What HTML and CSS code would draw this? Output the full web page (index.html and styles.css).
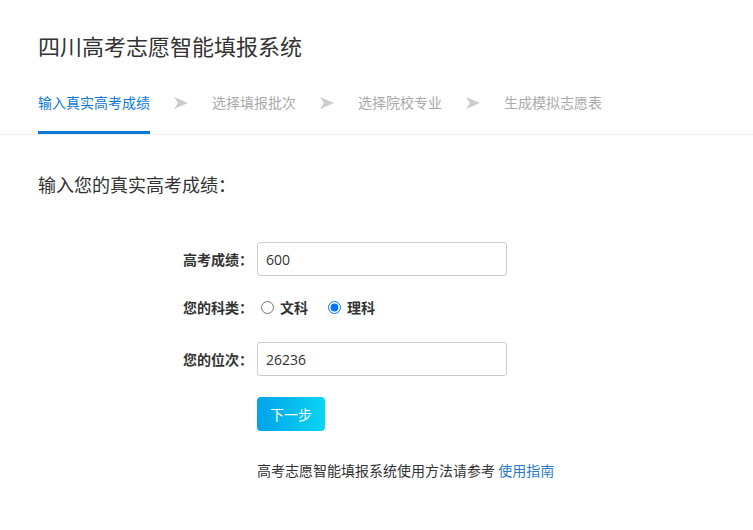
FILE: index.html
```html
<!DOCTYPE html>
<html lang="zh-CN">
<head>
<meta charset="utf-8">
<title>四川高考志愿智能填报系统</title>
<link rel="stylesheet" href="styles.css">
</head>
<body>
<header class="header">
  <h1 class="title">四川高考志愿智能填报系统</h1>
  <nav class="steps">
    <span class="step active">输入真实高考成绩</span>
    <svg class="arrow" width="14" height="12" viewBox="0 0 14 12"><path d="M0 0 L14 6 L0 12 L4 6 Z" fill="#cccccc"/></svg>
    <span class="step">选择填报批次</span>
    <svg class="arrow" width="14" height="12" viewBox="0 0 14 12"><path d="M0 0 L14 6 L0 12 L4 6 Z" fill="#cccccc"/></svg>
    <span class="step">选择院校专业</span>
    <svg class="arrow" width="14" height="12" viewBox="0 0 14 12"><path d="M0 0 L14 6 L0 12 L4 6 Z" fill="#cccccc"/></svg>
    <span class="step">生成模拟志愿表</span>
  </nav>
</header>
<main class="content">
  <h2 class="heading">输入您的真实高考成绩<span class="colon">：</span></h2>
  <form class="form">
    <div class="row">
      <label class="label">高考成绩<span class="colon">：</span></label>
      <input class="input" type="text" value="600">
    </div>
    <div class="row">
      <span class="label">您的科类<span class="colon">：</span></span>
      <label class="radio"><input type="radio" name="kl">文科</label>
      <label class="radio"><input type="radio" name="kl" checked>理科</label>
    </div>
    <div class="row">
      <label class="label">您的位次<span class="colon">：</span></label>
      <input class="input" type="text" value="26236">
    </div>
    <div class="row">
      <span class="label"></span>
      <button class="btn" type="button">下一步</button>
    </div>
    <p class="note"><span class="label"></span><span>高考志愿智能填报系统使用方法请参考 <a class="link" href="#">使用指南</a></span></p>
  </form>
</main>
</body>
</html>
```

FILE: styles.css
```css
html, body {
  margin: 0;
  padding: 0;
  background: #fff;
  font-family: "Noto Sans CJK SC", "Noto Sans", sans-serif;
  color: #333;
}
.colon {
  font-family: "Noto Sans CJK JP", "Noto Sans CJK SC", sans-serif;
}
.header {
  border-bottom: 1px solid #eeeeee;
  padding: 0 38px;
}
.title {
  margin: 0;
  padding-top: 30px;
  font-size: 22px;
  line-height: 30px;
  font-weight: normal;
  color: #333;
}
.steps {
  display: flex;
  align-items: flex-start;
  gap: 24px;
  margin-top: 32px;
}
.step {
  font-size: 14px;
  line-height: 20px;
  color: #aaaaaa;
  padding-bottom: 19px;
  border-bottom: 3px solid transparent;
}
.step.active {
  color: #0b79d9;
  border-bottom-color: #0b79d9;
}
.arrow {
  margin-top: 5px;
}
.content {
  padding: 37px 38px 0;
}
.heading {
  margin: 0;
  font-size: 18px;
  line-height: 24px;
  font-weight: normal;
  color: #333;
}
.form {
  margin-top: 46px;
}
.row {
  display: flex;
  align-items: center;
  height: 34px;
  margin-bottom: 14px;
}
.row:nth-child(2) {
  margin-bottom: 18px;
}
.row:nth-child(3) {
  margin-bottom: 21px;
}
.label {
  width: 215px;
  margin-right: 4px;
  text-align: right;
  font-size: 14px;
  font-weight: bold;
  color: #333;
  flex-shrink: 0;
}
.input {
  box-sizing: border-box;
  width: 250px;
  height: 34px;
  border: 1px solid #cccccc;
  border-radius: 3px;
  padding: 0 8px;
  font-family: "Open Sans", "Noto Sans", sans-serif;
  font-size: 14px;
  color: #333;
  outline: none;
}
.radio {
  display: flex;
  align-items: center;
  font-size: 14px;
  font-weight: bold;
  color: #333;
  margin-right: 16px;
}
.radio input {
  margin: 0 6px 0 4px;
  width: 13px;
  height: 13px;
}
.btn {
  box-sizing: border-box;
  width: 68px;
  height: 34px;
  border: none;
  border-radius: 4px;
  background: linear-gradient(to right, #03a2ea, #0ad5f4);
  color: #fff;
  font-family: "Noto Sans CJK SC", sans-serif;
  font-size: 14px;
  padding: 0;
}
.note {
  display: flex;
  margin: 29px 0 0;
  font-size: 14px;
  line-height: 20px;
  color: #333;
}
.note .label {
  font-weight: normal;
}
.link {
  color: #2a7bc9;
  text-decoration: none;
}
```
